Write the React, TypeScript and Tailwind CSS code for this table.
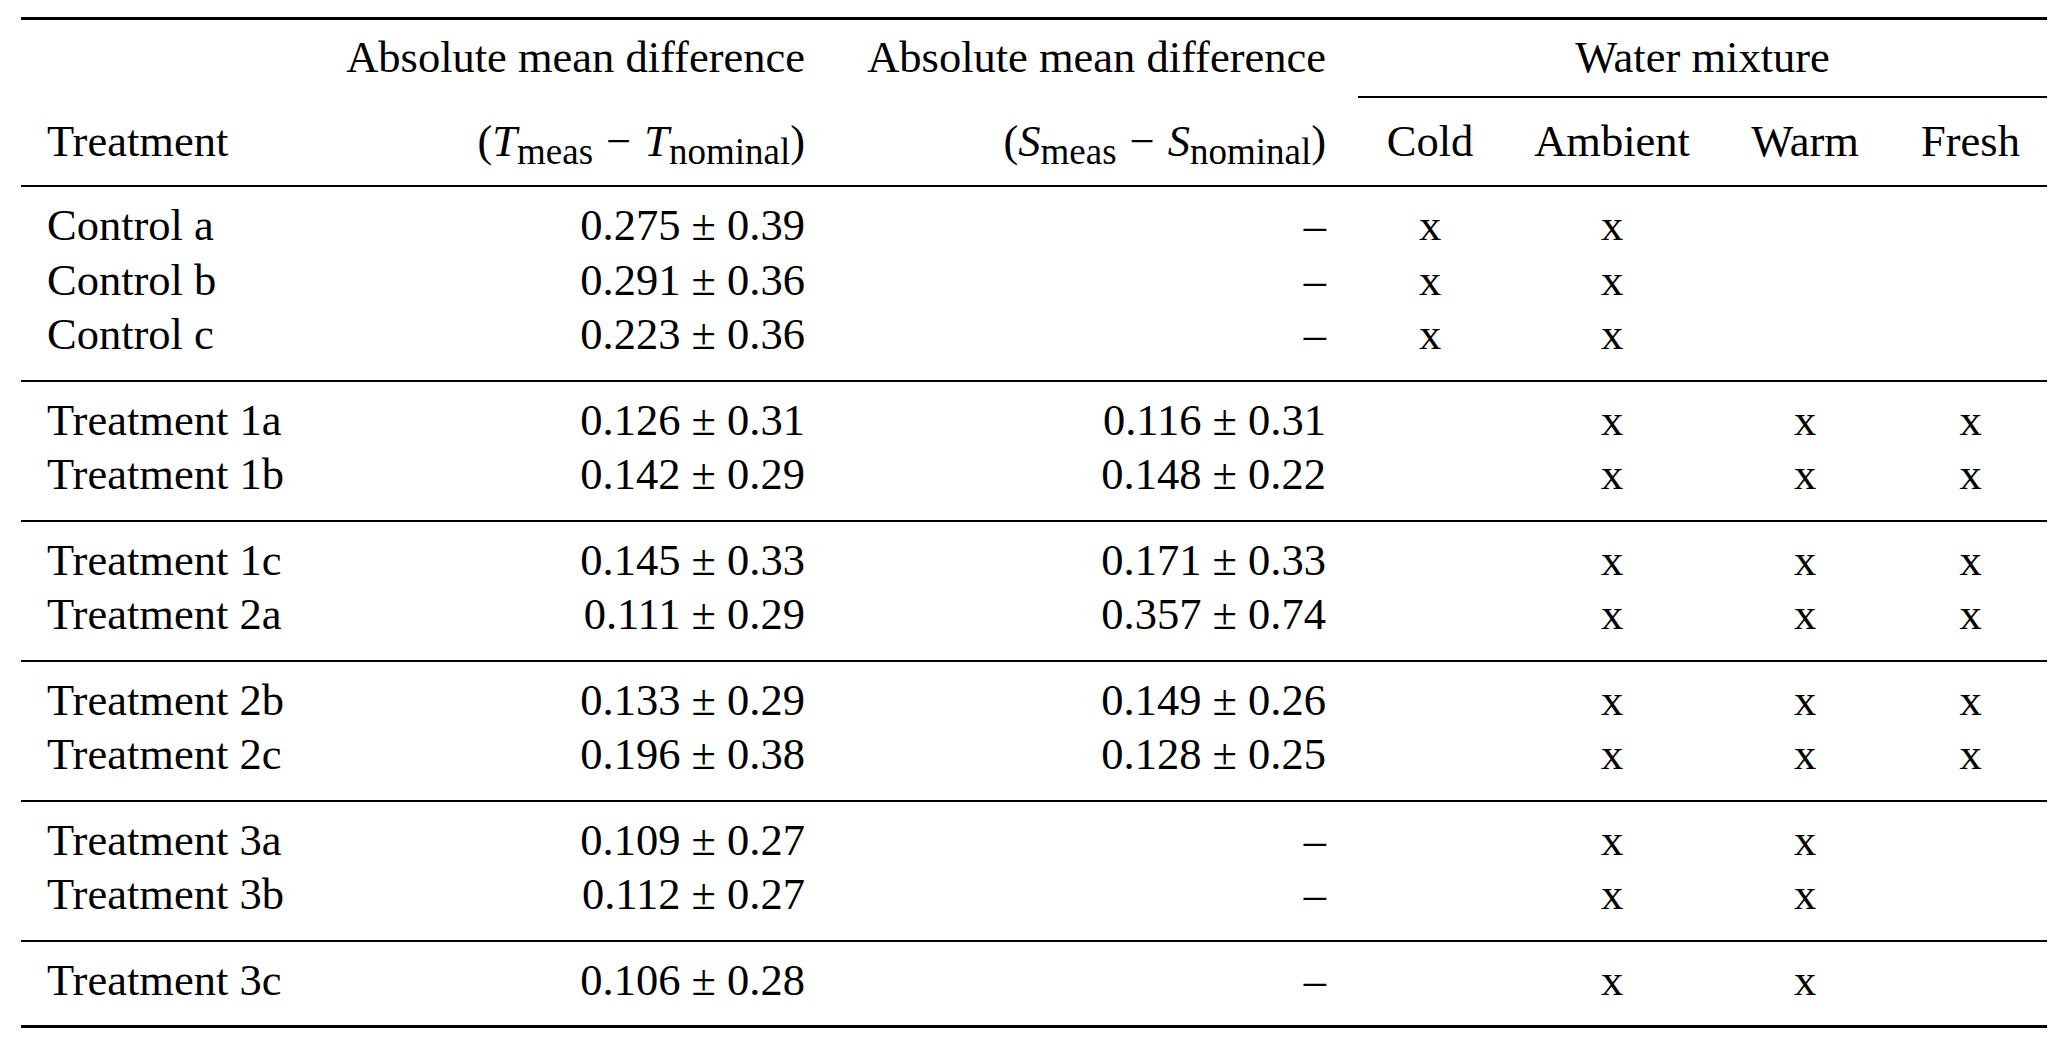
import React from 'react'

type Row = {
  name: string
  t: string
  s: string
  marks: [boolean, boolean, boolean, boolean]
}

const groups: Row[][] = [
  [
    { name: 'Control a', t: '0.275 ± 0.39', s: '–', marks: [true, true, false, false] },
    { name: 'Control b', t: '0.291 ± 0.36', s: '–', marks: [true, true, false, false] },
    { name: 'Control c', t: '0.223 ± 0.36', s: '–', marks: [true, true, false, false] },
  ],
  [
    { name: 'Treatment 1a', t: '0.126 ± 0.31', s: '0.116 ± 0.31', marks: [false, true, true, true] },
    { name: 'Treatment 1b', t: '0.142 ± 0.29', s: '0.148 ± 0.22', marks: [false, true, true, true] },
  ],
  [
    { name: 'Treatment 1c', t: '0.145 ± 0.33', s: '0.171 ± 0.33', marks: [false, true, true, true] },
    { name: 'Treatment 2a', t: '0.111 ± 0.29', s: '0.357 ± 0.74', marks: [false, true, true, true] },
  ],
  [
    { name: 'Treatment 2b', t: '0.133 ± 0.29', s: '0.149 ± 0.26', marks: [false, true, true, true] },
    { name: 'Treatment 2c', t: '0.196 ± 0.38', s: '0.128 ± 0.25', marks: [false, true, true, true] },
  ],
  [
    { name: 'Treatment 3a', t: '0.109 ± 0.27', s: '–', marks: [false, true, true, false] },
    { name: 'Treatment 3b', t: '0.112 ± 0.27', s: '–', marks: [false, true, true, false] },
  ],
  [
    { name: 'Treatment 3c', t: '0.106 ± 0.28', s: '–', marks: [false, true, true, false] },
  ],
]

const cols = 'grid grid-cols-[379px_431px_521px_156px_208px_178px_153px]'

// (X_meas − X_nominal)
function Diff({ v }: { v: string }) {
  return (
    <>
      (<i>{v}</i>
      <sub className="text-[37px] bottom-[-8px]">meas</sub>
      <span className="mx-[13px]">−</span>
      <i>{v}</i>
      <sub className="text-[37px] bottom-[-8px]">nominal</sub>)
    </>
  )
}

function DataRow({ row }: { row: Row }) {
  return (
    <div className={cols}>
      <div className="pl-[26px] whitespace-nowrap">{row.name}</div>
      <div className="pr-[26px] text-right whitespace-nowrap">{row.t}</div>
      <div className="pr-[26px] text-right whitespace-nowrap">{row.s}</div>
      {row.marks.map((m, i) => (
        <div key={i} className="text-center">
          {m ? 'x' : ''}
        </div>
      ))}
    </div>
  )
}

export default function App() {
  return (
    <div className="min-h-screen bg-white pl-[21px] pt-[17px] text-black">
      <div className="w-[2026px] font-['Liberation_Serif',_'Times_New_Roman',_serif] text-[44.5px] leading-[54.5px]">
        <div className="h-[3px] bg-black" />

        {/* header */}
        <div className={`${cols} whitespace-nowrap`}>
          <div className="pt-[10px] pb-[11px]" />
          <div className="-ml-[60px] pt-[10px] pb-[11px] pr-[26px] text-right">Absolute mean difference</div>
          <div className="pt-[10px] pb-[11px] pr-[26px] text-right">Absolute mean difference</div>
          <div className="col-span-4 pl-[6px]">
            <div className="border-b-2 border-black pt-[10px] pb-[11px] text-center">Water mixture</div>
          </div>
        </div>
        <div className={`${cols} pt-[16px] pb-[17px] whitespace-nowrap`}>
          <div className="pl-[26px]">Treatment</div>
          <div className="pr-[26px] text-right">
            <Diff v="T" />
          </div>
          <div className="pr-[26px] text-right">
            <Diff v="S" />
          </div>
          <div className="text-center">Cold</div>
          <div className="text-center">Ambient</div>
          <div className="text-center">Warm</div>
          <div className="text-center">Fresh</div>
        </div>

        {groups.map((g, gi) => (
          <div key={gi}>
            <div className="h-[2px] bg-black" />
            <div className="pt-[11px] pb-[18px]">
              {g.map((r) => (
                <DataRow key={r.name} row={r} />
              ))}
            </div>
          </div>
        ))}
        <div className="h-[3px] bg-black" />
      </div>
    </div>
  )
}
